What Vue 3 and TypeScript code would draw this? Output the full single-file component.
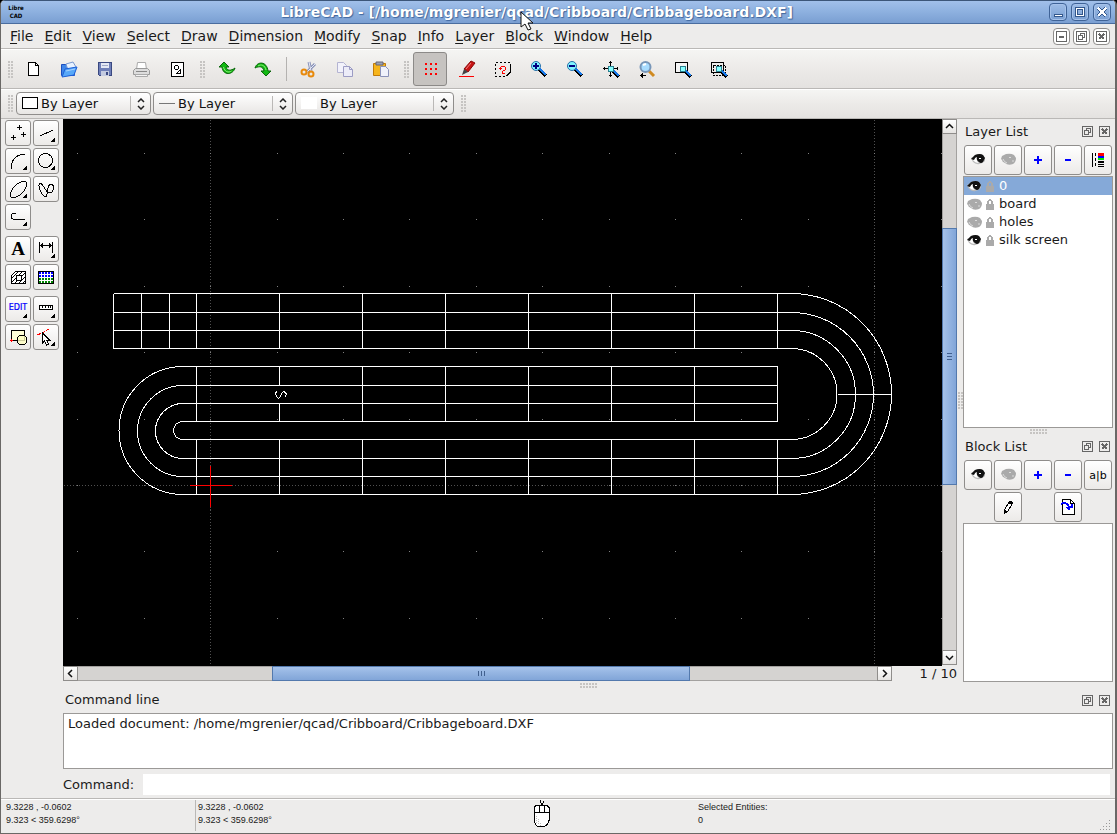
<script setup lang="ts">
import { ref } from 'vue'

interface Tool { id: string; label: string; menu?: boolean; pressed?: boolean }
interface Layer { name: string; visible: boolean }

const menus: string[] = ['File', 'Edit', 'View', 'Select', 'Draw', 'Dimension', 'Modify', 'Snap', 'Info', 'Layer', 'Block', 'Window', 'Help']

const fileTools: Tool[] = [
  { id: 'new', label: 'New' },
  { id: 'open', label: 'Open' },
  { id: 'save', label: 'Save' },
  { id: 'print', label: 'Print' },
  { id: 'preview', label: 'Print preview' },
]
const undoTools: Tool[] = [
  { id: 'undo', label: 'Undo' },
  { id: 'redo', label: 'Redo' },
]
const clipTools: Tool[] = [
  { id: 'cut', label: 'Cut' },
  { id: 'copy', label: 'Copy' },
  { id: 'paste', label: 'Paste' },
]
const viewTools: Tool[] = [
  { id: 'grid', label: 'Grid', pressed: true },
  { id: 'draft', label: 'Draft' },
  { id: 'redraw', label: 'Redraw' },
  { id: 'zoomin', label: 'Zoom in' },
  { id: 'zoomout', label: 'Zoom out' },
  { id: 'zoomauto', label: 'Auto zoom' },
  { id: 'zoomprev', label: 'Previous view' },
  { id: 'zoomwin', label: 'Window zoom' },
  { id: 'zoompan', label: 'Zoom panning' },
]
const drawGroups: Tool[][] = [
  [
    { id: 'points', label: 'Points' },
    { id: 'line', label: 'Lines', menu: true },
    { id: 'arc', label: 'Arcs', menu: true },
    { id: 'circle', label: 'Circles', menu: true },
    { id: 'ellipse', label: 'Ellipses', menu: true },
    { id: 'spline', label: 'Splines' },
    { id: 'polyline', label: 'Polylines', menu: true },
  ],
  [
    { id: 'text', label: 'Text' },
    { id: 'dim', label: 'Dimensions', menu: true },
    { id: 'hatch', label: 'Hatch' },
    { id: 'image', label: 'Image' },
  ],
  [
    { id: 'edit', label: 'Edit', menu: true },
    { id: 'measure', label: 'Measure', menu: true },
    { id: 'block', label: 'Create block' },
    { id: 'select', label: 'Select', menu: true },
  ],
]
const layerTools: Tool[] = [
  { id: 'eye', label: 'Show all layers' },
  { id: 'eyeoff', label: 'Hide all layers' },
  { id: 'plus', label: 'Add layer' },
  { id: 'minus', label: 'Remove layer' },
  { id: 'attrs', label: 'Layer attributes' },
]
const blockTools: Tool[] = [
  { id: 'eye', label: 'Show all blocks' },
  { id: 'eyeoff', label: 'Hide all blocks' },
  { id: 'plus', label: 'Add block' },
  { id: 'minus', label: 'Remove block' },
  { id: 'rename', label: 'Rename block' },
]
const layers: Layer[] = [
  { name: '0', visible: true },
  { name: 'board', visible: false },
  { name: 'holes', visible: false },
  { name: 'silk screen', visible: true },
]
const current = ref('0')
const command = ref('')

const soft = (shapes: string) => `<g shape-rendering="auto">${shapes}</g>`
const lens = (x: number, y: number) =>
  `<path d="M${x + 3} ${y + 3}l7 7" stroke="#000" stroke-width="4"/><path d="M${x + 4} ${y + 3}l6 6" stroke="#1878e8" stroke-width="2"/><g shape-rendering="auto"><circle cx="${x}" cy="${y}" r="4.500" fill="#7ff4ff" stroke="#2a6fa8"/></g>`
const smallLens = (x: number, y: number) =>
  `<path d="M${x + 2} ${y + 2}l6 6" stroke="#000" stroke-width="4"/><path d="M${x + 3} ${y + 2}l5 5" stroke="#1878e8" stroke-width="2"/><circle cx="${x}" cy="${y}" r="3" fill="#8ff" stroke="#2a7f8f"/>`

const icons: Record<string, string> = {
  new: '<path d="M7.500 5.500h7l3 3v10h-10z" fill="#fff" stroke="#000"/><path d="M14.500 5.500v3h3" fill="none" stroke="#000"/>',
  open: soft('<path d="M4.500 7.500h5l1 2h7v9h-13z" fill="#3f86e8" stroke="#1c4fc0"/><path d="M9 7l7-2 3 5-8 3z" fill="#e8f2ff" stroke="#7a9ad0"/><path d="M8 12l12-2-3 8-12 2z" fill="#58a8f8" stroke="#1c5fd8"/><path d="M9 14l9-2" stroke="#a8d4ff"/>'),
  save: '<path d="M5.500 5.500h13v13h-12l-1-1z" fill="#6f7fb8" stroke="#3a4880"/><path d="M8 6h8v5H8z" fill="#e4e8f4"/><path d="M8 14h8v5H8z" fill="#c4cbe0"/><path d="M13 15h2v3h-2z" fill="#3a4880"/><path d="M9 8.500h6" stroke="#a0a8c8"/>',
  print: soft('<path d="M8.500 5.500h8l1 7h-10z" fill="#fff" stroke="#aaa"/><path d="M4.500 13.500l2-2h12l2 2v4h-16z" fill="#ddd" stroke="#999"/><path d="M6.500 17.500h12v2h-12z" fill="#f4f4f4" stroke="#aaa"/><path d="M7 14.500h11" stroke="#888"/>'),
  preview: '<path d="M6.500 5.500h12v14h-12z" fill="#fff" stroke="#000"/><path d="M10 8.500h3M10 12.500h3M9.500 9v3M13.500 9v3M15.500 12v5M11 16.500h5M12 15.500h1M13 14.500h1M14 13.500h1" fill="none" stroke="#000"/>',
  undo: soft('<path d="M4 10l5-5 5 5h-3c1 4 5 4 9 1-2 7-12 8-13-1z" fill="#12b812" stroke="#0a650a"/><path d="M8.500 10c1 5 5 6 8 4" fill="none" stroke="#8cf07a"/>'),
  redo: soft('<path d="M20 14l-5 5-5-5h3c-1-5-5-5-9-3 2-7 12-7 13 3z" fill="#12b812" stroke="#0a650a"/><path d="M15 13c-1-5-5-6-8-4" fill="none" stroke="#8cf07a"/>'),
  cut: soft('<path d="M12 5l2 9M18 7l-8 8" stroke="#8a93b8" stroke-width="3"/><path d="M12 5l2 9M18 7l-8 8" stroke="#e6e9f6"/><circle cx="7" cy="15" r="2.500" fill="none" stroke="#e88a0c" stroke-width="2"/><circle cx="14" cy="17" r="2.500" fill="none" stroke="#e88a0c" stroke-width="2"/>'),
  copy: soft('<path d="M4.500 5.500h6l3 3v7h-9z" fill="#f2f2fb" stroke="#b4b4d2"/><path d="M10.500 9.500h6l3 3v7h-9z" fill="#ececf8" stroke="#9c9cc4"/><path d="M16.500 9.500v3h3" fill="none" stroke="#9c9cc4"/>'),
  paste: soft('<path d="M4.500 6.500h12v12h-12z" fill="#f6b51c" stroke="#c07a08"/><path d="M7 5h7v3H7z" fill="#9aa2b8" stroke="#667"/><path d="M11.500 9.500h5l3 3v7h-8z" fill="#f0f2fb" stroke="#8a92b8"/>'),
  grid: '<path d="M6 6h2v2H6zM11 6h2v2h-2zM16 6h2v2h-2zM6 11h2v2H6zM11 11h2v2h-2zM16 11h2v2h-2zM6 16h2v2H6zM11 16h2v2h-2zM16 16h2v2h-2z" fill="#f00"/>',
  draft: soft('<path d="M16 4l4 2-7 9-4-3z" fill="#c81414" stroke="#8a0808"/><path d="M16 6l-5 6" stroke="#f08080"/><path d="M9 12l4 3-6 3z" fill="#444"/>') + '<path d="M4 19.500h15" stroke="#f00"/>',
  redraw: '<path d="M4.500 5.500h15v10l-4 4h-11z" fill="none" stroke="#000" stroke-dasharray="2 2"/><path d="M19.500 8v7l-4 4" fill="none" stroke="#000"/><path d="M10 9.500h4M14.500 10v3M12 13.500h2M11.500 14v2M11 16.500h3M9.500 10v3M8 11.500h3" fill="none" stroke="#f00"/>',
  zoomin: lens(9, 9) + '<path d="M6 9h6M9 6v6" stroke="#000080" stroke-width="2"/>',
  zoomout: lens(9, 9) + '<path d="M6 9h6" stroke="#000080" stroke-width="2"/>',
  zoomauto: '<path d="M4 11.500h15M11.500 4v16M5.500 10v3M10 5.500h3M18.500 10v3M10 18.500h3" stroke="#000"/>' + smallLens(12, 12),
  zoomprev: soft('<path d="M14 14l5 5" stroke="#d08a20" stroke-width="3"/><circle cx="10.500" cy="10" r="5" fill="#a8dcff" stroke="#7896b8" stroke-width="2"/><path d="M8 8l3-1" stroke="#fff" stroke-width="2"/>') + '<path d="M5 18.500h6M6.500 17v3M7.500 16v5" stroke="#000"/>',
  zoomwin: '<path d="M4.500 5.500h12v10h-12z" fill="#f4f4f4" stroke="#000"/>' + smallLens(12, 12),
  zoompan: '<path d="M4.500 5.500h12v10h-12z" fill="none" stroke="#000"/><path d="M6.500 8.500h12v10h-12z" fill="none" stroke="#000" stroke-dasharray="2 1"/>' + smallLens(12, 12),
  points: '<path d="M11 6.500h5M13.500 4v5M15 13.500h5M17.500 11v5M5 16.500h5M7.500 14v5" stroke="#000"/>',
  line: '<path d="M6 15L19 9" stroke="#000"/>',
  arc: '<path d="M5.500 20C5 12 9 5 19 5.500" fill="none" stroke="#000"/>',
  circle: '<circle cx="11.500" cy="11.500" r="7" fill="none" stroke="#000"/>',
  ellipse: '<ellipse cx="12.500" cy="12.500" rx="10.500" ry="5" transform="rotate(-45 12.500 12.500)" fill="none" stroke="#000"/>',
  spline: '<path d="M12 20C7 19 3 7 6 6c3 0 6 10 9 10 5 0 6-8 2-9-5 0-3 13-5 13z" fill="none" stroke="#000"/>',
  polyline: '<path d="M10 8C3 8 4 14 9 14.500h10" fill="none" stroke="#000"/>',
  text: '<text x="12" y="18" text-anchor="middle" font-family="Liberation Serif, serif" font-weight="bold" font-size="19" fill="#000">A</text>',
  dim: '<path d="M5.500 5v11M18.500 5v11M6 8.500h13M8.500 6v5M15.500 6v5M7.500 7v3M16.500 7v3" fill="none" stroke="#000"/>',
  hatch: '<path d="M5.500 18.500v-8l4-4h10v12z" fill="#fff" stroke="#000"/><path d="M6 13l6-6M6 17L16 7M9 18L19 8M13 18l6-6M17 18l2-2" stroke="#000"/><path d="M10.500 10.500h5v5h-5z" fill="#fff" stroke="#000"/>',
  image: '<path d="M4.500 6.500h15v12h-15z" fill="#fff" stroke="#000"/><path d="M5 7h14v5H5z" fill="#00f"/><path d="M5 13h14v5H5z" fill="#080"/><path d="M5 9.500h14M5 15.500h14M7.500 7v11M10.500 7v11M13.500 7v11M16.500 7v11" stroke="#fff"/>',
  edit: '<text x="12" y="13" text-anchor="middle" font-family="DejaVu Sans, sans-serif" font-size="8" fill="#00f" stroke="#00f" stroke-width="0.200">EDIT</text>',
  measure: '<path d="M5.500 8.500h13v4h-13z" fill="#fff" stroke="#000"/><path d="M8.500 9v2M11.500 9v2M14.500 9v2M16.500 9v2" stroke="#000"/>',
  block: '<path d="M5.500 5.500h13v10h-13z" fill="#ffffd8" stroke="#000"/><circle cx="16" cy="15" r="5" fill="#ffffc0" fill-opacity="0.800" stroke="#000"/><path d="M4 15.500h3M5.500 14v3" stroke="#f00"/>',
  select: '<path d="M3 10l5-2 7-4" fill="none" stroke="#f00" stroke-dasharray="4 1"/><path d="M8.500 8v10l2-2 2 4 2-1-2-4h3z" fill="#fff" stroke="#000"/>',
  eye: soft('<path d="M5 10l2-1 2-2q5-2 8 0l2 3v3q-4 4-8 3-4-1-5-4z" fill="#bbb"/><path d="M7 12q2-3 4-3-1 4 2 6-4 0-6-3z" fill="#fff"/><path d="M5 11l4-4q5-2 8 0l2 3-2 4q-2 2-4 0-3-2-2-5-2 0-3 3z" fill="#111"/><path d="M13 10h2v1h-2z" fill="#fff"/>'),
  eyeoff: soft('<path d="M5 11l1-3 4-2q5-1 8 1l2 3q0 4-3 6-5 2-8-1-3-1-3-3z" fill="#aaa"/><path d="M7 11q1 3 4 4M13 9.500h2M17 12v2" fill="none" stroke="#dcdcdc"/>'),
  plus: '<path d="M8 12h8M12 8v8" stroke="#00f" stroke-width="2"/>',
  minus: '<path d="M9 12h6" stroke="#00f" stroke-width="2"/>',
  attrs: '<path d="M6.500 5v14" stroke="#000"/><path d="M9.500 5v14" stroke="#000" stroke-dasharray="3 2"/><path d="M12 5h6v3h-6z" fill="#f00"/><path d="M12 8h6v2h-6z" fill="#00f"/><path d="M12 10h6v2h-6z" fill="#0e0"/><path d="M12 13h6v2h-6zM12 16h6v1h-6zM12 18h6v1h-6z" fill="#000"/>',
  rename: '<text x="12" y="16" text-anchor="middle" font-family="DejaVu Sans, sans-serif" font-size="11" fill="#000">a|b</text>',
  pencil: '<path d="M8.500 18.500v-4l5-8c2-1 3 0 3 2l-5 8z" fill="#fff" stroke="#000"/><path d="M13 7l3 2M8 18l2-2" stroke="#000" stroke-width="2"/>',
  insert: '<path d="M6.500 4.500h8l4 4v11h-12z" fill="#fff" stroke="#000"/><path d="M14.500 4.500v4h4" fill="none" stroke="#000"/><path d="M5 9c4-2 7 0 8 3" fill="none" stroke="#00f" stroke-width="2"/><path d="M10 12h6v-3l-3 6z" fill="#00f" stroke="#00f"/>',
}

const range = (from: number, step: number, count: number) =>
  Array.from({ length: count }, (_, i) => Math.round(from + i * step))
const gridX = range(77.300, 66.400, 14)
const gridY = range(153, 66.400, 8)
const dots = gridY.map(y => gridX.map(x => `M${x - 0.5} ${y}h1`).join('')).join('')

const columns = range(196, 83, 8)
const lanes = [
  ...[113, 141, 169, ...columns].map(x => `M${x} 293V348`),
  ...columns.filter(x => x !== 279).map(x => `M${x} 366V421`),
  'M279 366V385M279 403V421',
  ...columns.map(x => `M${x} 439V494`),
  'M777 366V421M837 394H891',
].join('')
const rails = [
  'M113 293H791A100 100.500 0 0 1 791 494H182.500A64 64 0 0 1 182.500 366H777',
  'M113 312H791A82 82 0 0 1 791 476H182.500A45.500 45.500 0 0 1 182.500 385H777',
  'M113 330H791A64 64 0 0 1 791 458H182.500A27.500 27.500 0 0 1 182.500 403H777',
  'M113 348H791A45.500 45.500 0 0 1 791 439H182A9 9 0 0 1 182 421H777',
].join('')
</script>

<template>
  <div class="window">
    <header class="titlebar">
      <div class="logo"><span>Libre</span><span>CAD</span></div>
      <h1>LibreCAD - [/home/mgrenier/qcad/Cribboard/Cribbageboard.DXF]</h1>
      <div class="winbtns">
        <button type="button" aria-label="Minimize"><svg viewBox="0 0 16 16"><path d="M4 10.500h8v2H4z" fill="#fff" stroke="#33578c" /></svg></button>
        <button type="button" aria-label="Maximize"><svg viewBox="0 0 16 16"><path d="M4.500 4.500h7v7h-7z" fill="none" stroke="#33578c" stroke-width="3" /><path d="M4.500 4.500h7v7h-7z" fill="none" stroke="#fff" /></svg></button>
        <button type="button" aria-label="Close"><svg viewBox="0 0 16 16"><path d="M4 4l8 8M12 4l-8 8" stroke="#33578c" stroke-width="4" /><path d="M4 4l8 8M12 4l-8 8" stroke="#fff" stroke-width="2" /></svg></button>
      </div>
      <svg class="pointer" viewBox="0 0 14 20" aria-hidden="true"><path d="M1 1v15l4-3 3 6 3-1-3-6h5z" fill="#fff" stroke="#111" /></svg>
    </header>

    <nav class="menubar">
      <button v-for="m in menus" :key="m" type="button"><u>{{ m[0] }}</u>{{ m.slice(1) }}</button>
      <div class="mdi">
        <button type="button" aria-label="Minimize document"><svg viewBox="0 0 11 11"><rect x="0.500" y="0.500" width="10" height="10" rx="1" /><path d="M3 5.500h5" stroke-width="2" /></svg></button>
        <button type="button" aria-label="Restore document"><svg viewBox="0 0 11 11"><rect x="0.500" y="0.500" width="10" height="10" rx="1" /><path d="M2.500 4.500h4v4h-4zM4.500 4v-1.500h4v4H7" /></svg></button>
        <button type="button" aria-label="Close document"><svg viewBox="0 0 11 11"><rect x="0.500" y="0.500" width="10" height="10" rx="1" /><path d="M3 3l5 5M8 3l-5 5" stroke-width="2" /></svg></button>
      </div>
    </nav>

    <div class="toolbar main">
      <i class="grip"></i>
      <button v-for="t in fileTools" :key="t.id" type="button" :aria-label="t.label"><svg viewBox="0 0 24 24" v-html="icons[t.id]"></svg></button>
      <i class="grip"></i>
      <button v-for="t in undoTools" :key="t.id" type="button" :aria-label="t.label"><svg viewBox="0 0 24 24" v-html="icons[t.id]"></svg></button>
      <i class="divider"></i>
      <button v-for="t in clipTools" :key="t.id" type="button" :aria-label="t.label"><svg viewBox="0 0 24 24" v-html="icons[t.id]"></svg></button>
      <i class="grip"></i>
      <button v-for="t in viewTools" :key="t.id" type="button" :aria-label="t.label" :class="{ pressed: t.pressed }"><svg viewBox="0 0 24 24" v-html="icons[t.id]"></svg></button>
    </div>

    <div class="toolbar pen">
      <i class="grip"></i>
      <div class="combo color">
        <select aria-label="Color"><option>By Layer</option></select>
        <i class="swatch"></i>
        <svg class="updown" viewBox="0 0 8 12"><path d="M1 4l3-3 3 3M1 8l3 3 3-3" /></svg>
      </div>
      <div class="combo width">
        <select aria-label="Line width"><option>By Layer</option></select>
        <i class="swatch"></i>
        <svg class="updown" viewBox="0 0 8 12"><path d="M1 4l3-3 3 3M1 8l3 3 3-3" /></svg>
      </div>
      <div class="combo type">
        <select aria-label="Line type"><option>By Layer</option></select>
        <i class="swatch"></i>
        <svg class="updown" viewBox="0 0 8 12"><path d="M1 4l3-3 3 3M1 8l3 3 3-3" /></svg>
      </div>
      <i class="grip"></i>
    </div>

    <div class="body">
      <aside class="tools">
        <div v-for="(group, i) in drawGroups" :key="i" class="group">
          <button v-for="t in group" :key="t.id" type="button" :aria-label="t.label">
            <svg viewBox="0 0 24 24"><g v-html="icons[t.id]"></g><path v-if="t.menu" d="M21 16v5h-5z" fill="#000" /></svg>
          </button>
        </div>
      </aside>

      <div class="content">
        <div class="upper">
          <main class="work">
            <div class="viewrow">
              <svg class="canvas" viewBox="62.5 118.5 879 547" preserveAspectRatio="xMidYMid slice" role="img" aria-label="Drawing">
                <path d="M210 119V667M874 119V667M63 485H942" stroke="#505050" stroke-dasharray="1 2" />
                <path :d="dots" stroke="#808080" />
                <path :d="lanes" class="ink" />
                <path :d="rails" class="ink" />
                <path d="M276 391L275 393 276 396 278 398 280 396 281 393 283 391 285 392 286 394 284 397" class="ink" />
                <path d="M210 465V506M189 485H231" stroke="#f00" />
              </svg>
              <div class="scroll vertical">
                <button type="button" aria-label="Scroll up"><svg viewBox="0 0 9 9"><path d="M1 6l3.500-3.500L8 6" /></svg></button>
                <div class="trough"><div class="thumb"><i></i></div></div>
                <button type="button" aria-label="Scroll down"><svg viewBox="0 0 9 9"><path d="M1 3l3.500 3.500L8 3" /></svg></button>
              </div>
            </div>
            <div class="scrollrow">
              <div class="scroll horizontal">
                <button type="button" aria-label="Scroll left"><svg viewBox="0 0 9 9"><path d="M6 1L2.500 4.500 6 8" /></svg></button>
                <div class="trough"><div class="thumb"><i></i></div></div>
                <button type="button" aria-label="Scroll right"><svg viewBox="0 0 9 9"><path d="M3 1l3.500 3.500L3 8" /></svg></button>
              </div>
              <span class="gridstatus">1 / 10</span>
            </div>
          </main>
          <div class="vsplit"><i></i></div>
          <aside class="docks">
            <section class="layerdock">
              <div class="docktitle">
                <h2>Layer List</h2>
                <button type="button" aria-label="Float layer list"><svg viewBox="0 0 11 11"><rect x="0.500" y="0.500" width="10" height="10" rx="1" /><path d="M2.500 4.500h4v4h-4zM4.500 4v-1.500h4v4H7" /></svg></button>
                <button type="button" aria-label="Close layer list"><svg viewBox="0 0 11 11"><rect x="0.500" y="0.500" width="10" height="10" rx="1" /><path d="M3 3l5 5M8 3l-5 5" stroke-width="2" /></svg></button>
              </div>
              <div class="dockbtns">
                <button v-for="t in layerTools" :key="t.id" type="button" :aria-label="t.label"><svg viewBox="0 0 24 24" v-html="icons[t.id]"></svg></button>
              </div>
              <ul class="list">
                <li v-for="l in layers" :key="l.name" :class="{ current: l.name === current }" @click="current = l.name">
                  <svg class="eye" viewBox="4 5 16 13" v-html="icons[l.visible ? 'eye' : 'eyeoff']"></svg>
                  <svg class="lock" viewBox="0 0 8 11"><path d="M0 5h8v6H0z" fill="#aaa" /><path d="M2 5V2.500Q4 0 6 2.500V5" fill="none" stroke="#aaa" stroke-width="2" /></svg>
                  <span>{{ l.name }}</span>
                </li>
              </ul>
            </section>
            <div class="hsplit"><i></i></div>
            <section class="blockdock">
              <div class="docktitle">
                <h2>Block List</h2>
                <button type="button" aria-label="Float block list"><svg viewBox="0 0 11 11"><rect x="0.500" y="0.500" width="10" height="10" rx="1" /><path d="M2.500 4.500h4v4h-4zM4.500 4v-1.500h4v4H7" /></svg></button>
                <button type="button" aria-label="Close block list"><svg viewBox="0 0 11 11"><rect x="0.500" y="0.500" width="10" height="10" rx="1" /><path d="M3 3l5 5M8 3l-5 5" stroke-width="2" /></svg></button>
              </div>
              <div class="dockbtns">
                <button v-for="t in blockTools" :key="t.id" type="button" :aria-label="t.label"><svg viewBox="0 0 24 24" v-html="icons[t.id]"></svg></button>
              </div>
              <div class="dockbtns second">
                <button type="button" class="c2" aria-label="Edit block"><svg viewBox="0 0 24 24" v-html="icons.pencil"></svg></button>
                <button type="button" class="c4" aria-label="Insert block"><svg viewBox="0 0 24 24" v-html="icons.insert"></svg></button>
              </div>
              <ul class="list"></ul>
            </section>
          </aside>
        </div>
        <div class="hsplit"><i></i></div>
        <section class="commanddock">
          <div class="docktitle">
            <h2>Command line</h2>
            <button type="button" aria-label="Float command line"><svg viewBox="0 0 11 11"><rect x="0.500" y="0.500" width="10" height="10" rx="1" /><path d="M2.500 4.500h4v4h-4zM4.500 4v-1.500h4v4H7" /></svg></button>
            <button type="button" aria-label="Close command line"><svg viewBox="0 0 11 11"><rect x="0.500" y="0.500" width="10" height="10" rx="1" /><path d="M3 3l5 5M8 3l-5 5" stroke-width="2" /></svg></button>
          </div>
          <div class="log">Loaded document: /home/mgrenier/qcad/Cribboard/Cribbageboard.DXF</div>
          <div class="prompt">
            <label for="command">Command:</label>
            <input id="command" v-model="command" type="text" />
          </div>
        </section>
      </div>
    </div>

    <footer class="status">
      <div>9.3228 , -0.0602<br />9.323 &lt; 359.6298°</div>
      <div class="relative">9.3228 , -0.0602<br />9.323 &lt; 359.6298°</div>
      <svg viewBox="0 0 18 28" aria-hidden="true">
        <path d="M7 0v2l2 2v2M10 1v2L8 5" fill="none" stroke="#000" />
        <path d="M3 5.500h11l2 2v13q-1 6-7.500 6.500T1.500 20V7z" fill="#fff" stroke="#000" />
        <path d="M2 12.500h14M6.500 6v6M11.500 6v6" stroke="#000" />
        <path d="M3 16v7M5 19v6M7 23v3" stroke="#bbb" stroke-dasharray="1 1" />
      </svg>
      <div>Selected Entities:<br />0</div>
      <svg class="resize" viewBox="0 0 11 11" aria-hidden="true"><path d="M9 0h1v1H9zM6 3h1v1H6zM9 3h1v1H9zM3 6h1v1H3zM6 6h1v1H6zM9 6h1v1H9zM0 9h1v1H0zM3 9h1v1H3zM6 9h1v1H6zM9 9h1v1H9z" fill="#999" /></svg>
    </footer>
  </div>
</template>

<style>
html { background: #000; }
body { margin: 0; }
</style>

<style scoped>
* { box-sizing: border-box; }
.window {
  display: flex;
  flex-direction: column;
  height: 100vh;
  min-height: 600px;
  overflow: hidden;
  background: #edeceb;
  border: 1px solid #6a6866;
  border-top: 0;
  border-right-width: 2px;
  border-radius: 5px 5px 0 0;
  font: 13px/18px "DejaVu Sans", sans-serif;
  color: #1a1a1a;
}
button {
  padding: 0;
  margin: 0;
  border: 0;
  background: none;
  font: inherit;
  color: inherit;
}
svg { display: block; shape-rendering: crispEdges; }
h1, h2 { margin: 0; font-size: 13px; }
h2 { font-weight: normal; }

.titlebar {
  position: relative;
  display: flex;
  align-items: center;
  flex: none;
  height: 24px;
  padding: 0 4px 0 7px;
  border-top: 1px solid #3c5679;
  border-bottom: 1px solid #4a6d9f;
  background: linear-gradient(#a1c0ea, #8db0df 50%, #7a9fd2);
}
.logo {
  display: flex;
  flex-direction: column;
  width: 16px;
  font: bold 6px/8px "DejaVu Sans Condensed", "DejaVu Sans", sans-serif;
  text-align: center;
  color: #000;
}
.titlebar h1 {
  flex: 1;
  text-align: center;
  white-space: nowrap;
  font-size: 14px;
  color: #fff;
  text-shadow: 1px 1px 1px #41689f, 0 0 1px #41689f;
}
.winbtns { display: flex; gap: 4px; }
.winbtns button {
  width: 18px;
  height: 18px;
  border: 1px solid #3f6397;
  border-radius: 4px;
  background: linear-gradient(#9dbce6, #7ba0d3);
  box-shadow: inset 0 0 0 1px #a6c2ea;
}
.winbtns svg { width: 16px; height: 16px; }
.pointer { position: absolute; left: 519px; top: 10px; width: 14px; height: 20px; z-index: 2; shape-rendering: auto; }

.menubar {
  display: flex;
  align-items: center;
  flex: none;
  height: 25px;
  padding: 0 5px 0 3px;
  border-bottom: 1px solid #bab8b6;
}
.menubar > button { height: 22px; padding: 0 5px 0 6px; font-size: 14px; }
.menubar u { text-underline-offset: 2px; }
.mdi { display: flex; gap: 3px; margin-left: auto; }
.mdi button {
  display: grid;
  place-items: center;
  width: 17px;
  height: 17px;
  border: 1px solid #8f8d8b;
  border-radius: 4px;
  background: #fff;
}
.mdi svg, .docktitle svg { width: 11px; height: 11px; fill: none; stroke: #666; }

.toolbar {
  display: flex;
  align-items: center;
  flex: none;
  border-top: 1px solid #fff;
  border-bottom: 1px solid #bab8b6;
  background: linear-gradient(#f5f5f3, #eceae8 50%, #e4e2e0);
}
.grip, .vsplit i, .hsplit i {
  background: radial-gradient(circle at 1px 1px, #c6c4c2 1px, transparent 1px) 0 0 / 3px 3px;
}
.grip {
  flex: none;
  width: 5px;
  height: 17px;
}
.main { height: 40px; padding-left: 7px; }
.main .grip { margin: 0 4px 0 5px; }
.main .grip:first-child { margin-left: 0; margin-right: 2px; }
.main button {
  width: 34px;
  height: 34px;
  margin-right: 2px;
  padding: 4px 3px 4px 5px;
  border: 1px solid transparent;
  border-radius: 3px;
}
.main button svg { width: 24px; height: 24px; }
.main .pressed { border-color: #8c8a88; background: #c6c3c0; }
.divider { width: 1px; height: 24px; margin: 0 4px 0 5px; background: #b4b2b0; }

.pen { height: 30px; padding: 0 0 1px 7px; gap: 2px; }
.pen .grip:first-child { margin-right: 1px; }
.pen .grip:last-child { margin-left: 5px; }
.combo { position: relative; flex: none; height: 23px; }
.color { width: 135px; }
.width { width: 140px; }
.type { width: 159px; }
.combo select {
  appearance: none;
  width: 100%;
  height: 100%;
  padding: 0 24px;
  border: 1px solid #8f8d8b;
  border-radius: 4px;
  background: linear-gradient(90deg, #bab8b6, #bab8b6) right 19px center / 1px 15px no-repeat, linear-gradient(#fff, #e8e6e4);
  font: 13px/18px "DejaVu Sans", sans-serif;
  color: #111;
}
.swatch { position: absolute; left: 6px; top: 5px; width: 16px; height: 12px; pointer-events: none; }
.color .swatch { border: 1px solid #000; background: #fff; }
.width .swatch { top: 11px; height: 1px; background: #777; }
.type .swatch { background: #fff; }
.updown { position: absolute; right: 6px; top: 6px; width: 8px; height: 12px; fill: none; stroke: #222; stroke-width: 1.5; shape-rendering: auto; pointer-events: none; }

.body { display: flex; flex: 1; min-height: 0; }
.tools { display: flex; flex-direction: column; gap: 6px; flex: none; width: 62px; padding: 1px 4px; }
.group { display: grid; grid-template-columns: repeat(2, 26px); grid-auto-rows: 26px; gap: 2px; }
.group button, .dockbtns button {
  display: grid;
  place-items: center;
  border: 1px solid #8f8d8b;
  border-radius: 3px;
  background: linear-gradient(#fff, #eceae8);
}
.group svg, .dockbtns svg { width: 24px; height: 24px; }

.content { display: flex; flex-direction: column; flex: 1; min-width: 0; padding-right: 2px; }
.upper { display: flex; flex: 1; min-height: 0; }
.work { display: flex; flex-direction: column; flex: 1; min-width: 0; }
.viewrow { display: flex; flex: 1; min-height: 0; }
.canvas { flex: 1; min-width: 0; height: 100%; background: #000; fill: none; }
.ink { fill: none; stroke: #fff; }

.scroll { display: flex; }
.scroll button {
  display: grid;
  place-items: center;
  flex: none;
  width: 15px;
  height: 15px;
  border: 1px solid #8f8d8b;
  background: linear-gradient(#fff, #e6e4e2);
}
.scroll button svg { width: 9px; height: 9px; fill: none; stroke: #111; stroke-width: 1.5; shape-rendering: auto; }
.trough { display: flex; flex: 1; background: #d5d3d1; border: 0 solid #a3a19f; }
.thumb { display: grid; place-items: center; border: 1px solid #5379ad; }
.vertical { flex-direction: column; width: 15px; padding-bottom: 1px; }
.vertical .trough { flex-direction: column; border-width: 0 1px; }
.vertical .thumb { flex: 0 0 257px; margin: 94px -1px 0; background: linear-gradient(90deg, #a5c2ea, #81a5d8); }
.vertical .thumb i { width: 5px; height: 7px; background: repeating-linear-gradient(#41608f 0 1px, transparent 1px 3px); }
.scrollrow { display: flex; align-items: flex-start; justify-content: space-between; flex: none; height: 16px; }
.horizontal { flex: 1; }
.horizontal .trough { border-width: 1px 0; }
.horizontal .thumb { flex: 0 0 418px; margin: -1px 0 -1px 194px; background: linear-gradient(#a5c2ea, #81a5d8); }
.horizontal .thumb i { width: 7px; height: 5px; background: repeating-linear-gradient(90deg, #41608f 0 1px, transparent 1px 3px); }
.gridstatus { width: 65px; text-align: right; line-height: 15px; }

.vsplit { display: grid; place-items: center; flex: none; width: 6px; }
.vsplit i { width: 5px; height: 17px; }
.hsplit { display: grid; place-items: center; flex: none; height: 6px; }
.hsplit i { width: 17px; height: 5px; }

.docks { display: flex; flex-direction: column; flex: none; width: 150px; }
.docks section { display: flex; flex-direction: column; min-height: 0; }
.layerdock { flex: 309; }
.blockdock { flex: 248; }
.docktitle { display: flex; align-items: center; gap: 6px; flex: none; height: 26px; padding: 0 3px 1px 2px; }
.docktitle h2 { flex: 1; }
.dockbtns { display: grid; grid-template-columns: repeat(5, 28px); gap: 2px; flex: none; padding-left: 1px; }
.dockbtns button { height: 30px; }
.second { margin-top: 2px; }
.c2 { grid-column: 2; }
.c4 { grid-column: 4; }
.list { flex: 1; min-height: 0; margin: 1px 0 0; padding: 0; border: 1px solid #9b9997; background: #fff; list-style: none; }
.list li { display: flex; align-items: center; gap: 4px; height: 18px; padding-left: 2px; }
.list li span { padding: 0 0 1px 1px; }
.list .eye { width: 16px; height: 13px; }
.list .lock { width: 8px; height: 11px; }
.list .current { background: #85a9d8; color: #fff; }

.commanddock { display: flex; flex-direction: column; flex: none; height: 110px; }
.commanddock .docktitle { height: 25px; }
.log { flex: none; height: 56px; padding: 1px 4px; border: 1px solid #9b9997; background: #fff; white-space: nowrap; }
.prompt { display: flex; align-items: center; gap: 9px; margin-top: 5px; padding-right: 3px; }
.prompt input { flex: 1; height: 21px; padding: 0 4px; border: 0; background: #fff; font: inherit; }

.status {
  display: grid;
  grid-template-columns: 189px 338px 165px 1fr 11px;
  flex: none;
  height: 35px;
  padding: 1px 4px 2px 5px;
  border-top: 1px solid #bab8b6;
  box-shadow: inset 0 1px #fff;
  font: 9px/13px "Liberation Sans", sans-serif;
}
.status div { padding-top: 1px; }
.status svg { width: 18px; height: 28px; }
.status .relative { padding-left: 2px; border-left: 1px solid #bab8b6; }
.status .resize { width: 11px; height: 11px; align-self: end; }
</style>
